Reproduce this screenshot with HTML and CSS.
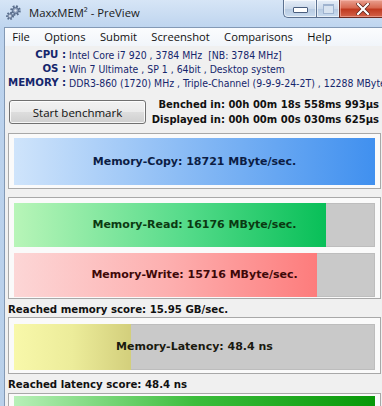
FILE: index.html
```html
<!DOCTYPE html>
<html>
<head>
<meta charset="utf-8">
<title>MaxxMEM² - PreView</title>
<link rel="stylesheet" href="styles.css">
</head>
<body>
<div class="window">
  <div class="titlebar">
    <svg class="app-icon" width="17" height="17" viewBox="0 0 17 17">
      <circle cx="10.5" cy="6.5" r="4" fill="none" stroke="#5a6e8c" stroke-width="2.6" stroke-dasharray="1.7 1.45"/>
      <circle cx="10.5" cy="6.5" r="3.2" fill="#8a9cb8" stroke="#4f6282" stroke-width="0.8"/>
      <circle cx="10.5" cy="6.5" r="1.2" fill="#dfe8f4"/>
      <circle cx="5" cy="12" r="2.9" fill="none" stroke="#5a6e8c" stroke-width="2.2" stroke-dasharray="1.4 1.3"/>
      <circle cx="5" cy="12" r="2.3" fill="#9aaac2" stroke="#4f6282" stroke-width="0.7"/>
      <circle cx="5" cy="12" r="0.9" fill="#dfe8f4"/>
    </svg>
    <span class="title">MaxxMEM² - PreView</span>
    <div class="controls">
      <div class="ctl ctl-min"><span class="min-glyph"></span></div>
      <div class="ctl ctl-max"><span class="max-glyph"></span></div>
      <div class="ctl ctl-close">
        <svg width="14" height="12" viewBox="0 0 14 12"><path d="M2 1 L12 11 M12 1 L2 11" stroke="#5a2018" stroke-width="3.6" stroke-linecap="square"/><path d="M2 1 L12 11 M12 1 L2 11" stroke="#ffffff" stroke-width="2.2" stroke-linecap="square"/></svg>
      </div>
    </div>
  </div>
  <div class="client">
    <div class="menubar">
      <span class="menu-item">File</span>
      <span class="menu-item">Options</span>
      <span class="menu-item">Submit</span>
      <span class="menu-item">Screenshot</span>
      <span class="menu-item">Comparisons</span>
      <span class="menu-item">Help</span>
    </div>
    <div class="info">
      <span class="info-label">CPU :</span><span class="info-value">Intel Core i7 920 , 3784 MHz&nbsp;&nbsp;[NB: 3784 MHz]</span>
      <span class="info-label">OS :</span><span class="info-value">Win 7 Ultimate , SP 1 , 64bit , Desktop system</span>
      <span class="info-label">MEMORY :</span><span class="info-value">DDR3-860 (1720) MHz , Triple-Channel (9-9-9-24-2T) , 12288 MByte</span>
    </div>
    <div class="actions">
      <div class="button">Start benchmark</div>
      <div class="times">
        <div>Benched in: 00h 00m 18s 558ms 993µs</div>
        <div>Displayed in: 00h 00m 00s 030ms 625µs</div>
      </div>
    </div>
    <div class="panel panel-copy">
      <div class="bar bar-copy">
        <div class="fill fill-copy" style="width:100%"></div>
        <div class="bar-label label-copy">Memory-Copy: 18721 MByte/sec.</div>
      </div>
    </div>
    <div class="panel panel-rw">
      <div class="bar bar-read">
        <div class="fill fill-read" style="width:86.4%"></div>
        <div class="bar-label label-read">Memory-Read: 16176 MByte/sec.</div>
      </div>
      <div class="bar bar-write">
        <div class="fill fill-write" style="width:83.9%"></div>
        <div class="bar-label label-write">Memory-Write: 15716 MByte/sec.</div>
      </div>
    </div>
    <div class="score">Reached memory score: 15.95 GB/sec.</div>
    <div class="panel panel-lat">
      <div class="bar bar-lat">
        <div class="fill fill-lat" style="width:32.3%"></div>
        <div class="bar-label label-lat">Memory-Latency: 48.4 ns</div>
      </div>
    </div>
    <div class="score score-lat">Reached latency score: 48.4 ns</div>
    <div class="panel panel-bottom">
      <div class="bar bar-bottom">
        <div class="fill fill-bottom" style="width:100%"></div>
      </div>
    </div>
  </div>
</div>
</body>
</html>
```
FILE: styles.css
```css
html, body {
  margin: 0;
  padding: 0;
  width: 382px;
  height: 406px;
  overflow: hidden;
  background: #b9d1ea;
}

.window {
  width: 392px;
  height: 406px;
  overflow: hidden;
  background: linear-gradient(#d6e5f6, #bcd3ee 30px, #b9d0ea);
  display: flex;
  flex-direction: column;
  padding: 0 4px;
  box-sizing: border-box;
}

/* title bar */
.titlebar {
  height: 27px;
  display: flex;
  align-items: flex-start;
  flex-shrink: 0;
}
.app-icon {
  margin: 4px 0 0 1px;
}
.title {
  margin: 5px 0 0 7px;
  font-family: "Open Sans", "Noto Sans", sans-serif;
  font-size: 11.3px;
  line-height: 16px;
  color: #1a1a1a;
}
.controls {
  margin-left: auto;
  margin-right: 2px;
  display: flex;
  height: 18px;
}
.ctl {
  height: 18px;
  box-sizing: border-box;
  border: 1px solid #5c7190;
  border-top: none;
  display: flex;
  align-items: center;
  justify-content: center;
}
.ctl-min {
  width: 33px;
  border-radius: 0 0 0 5px;
  border-right: none;
  background: linear-gradient(#e6eef8, #cbd9ea 50%, #b6c9e0 51%, #c9dbef);
  box-shadow: inset 0 0 0 1px rgba(255,255,255,0.6);
}
.min-glyph {
  width: 13px;
  height: 4px;
  margin-top: 3px;
  background: #ffffff;
  border: 1px solid #4a5e7e;
  border-radius: 1px;
}
.ctl-max {
  width: 23px;
  border-right: none;
  background: linear-gradient(#e6eef8, #cbd9ea 50%, #b6c9e0 51%, #c9dbef);
  box-shadow: inset 0 0 0 1px rgba(255,255,255,0.6);
}
.max-glyph {
  width: 9px;
  height: 7px;
  border: 1px solid #9fb3cf;
  border-top-width: 2px;
  background: #d8e3f0;
}
.ctl-close {
  width: 47px;
  border-color: #6b2a22;
  border-radius: 0 0 5px 0;
  background: linear-gradient(#e9a090, #d86a52 45%, #c03a20 55%, #d3634a);
  box-shadow: inset 0 0 0 1px rgba(255,200,190,0.5);
}

/* client area */
.client {
  flex: 1;
  min-height: 0;
  background: #f0f0f0;
  border-left: 1px solid #8399b5;
  border-top: 1px solid #8399b5;
  display: flex;
  flex-direction: column;
  font-family: "DejaVu Sans", sans-serif;
}

.menubar {
  height: 18px;
  flex-shrink: 0;
  display: flex;
  align-items: center;
  background: linear-gradient(#fbfcfe, #f1f5fa);
  font-family: "Open Sans", "Noto Sans", sans-serif;
  font-size: 11.2px;
  color: #111;
}
.menu-item {
  padding: 0 7.2px;
  line-height: 18px;
}

.info {
  display: grid;
  grid-template-columns: 58px auto;
  column-gap: 3px;
  padding: 2px 0 0 3px;
  font-size: 10.4px;
  line-height: 14px;
  color: #15266c;
  white-space: nowrap;
}
.info-label {
  font-weight: bold;
  font-size: 10.2px;
  text-align: right;
}
.info-value {
  font-stretch: condensed;
}

.actions {
  display: flex;
  align-items: flex-start;
  margin-top: 10px;
  padding-left: 4px;
  flex-shrink: 0;
}
.button {
  width: 137px;
  height: 24px;
  box-sizing: border-box;
  border: 1px solid #707070;
  border-radius: 3px;
  background: linear-gradient(#f2f2f2, #ebebeb 48%, #dddddd 52%, #cfcfcf);
  box-shadow: inset 0 0 0 1px rgba(255,255,255,0.8);
  display: flex;
  align-items: center;
  justify-content: center;
  font-family: "Open Sans", "Noto Sans", sans-serif;
  font-size: 11.5px;
  color: #111;
}
.times {
  margin-left: auto;
  margin-right: 9px;
  margin-top: -3px;
  text-align: right;
  font-weight: bold;
  font-size: 10px;
  line-height: 15px;
  color: #111;
  white-space: nowrap;
}

/* panels */
.panel {
  flex-shrink: 0;
  margin: 0 7px 0 3px;
  border: 1px solid #a8a8a8;
  background: #fafafa;
  padding: 4px 5px 3px 5px;
  display: flex;
  flex-direction: column;
  gap: 6px;
}
.panel-copy {
  margin-top: 6px;
}
.panel-rw {
  margin-top: 8px;
  padding-top: 5px;
  padding-bottom: 1px;
}
.panel-lat {
  padding-top: 6px;
  padding-bottom: 3px;
}
.panel-bottom {
  padding-top: 2px;
}

.bar {
  display: grid;
  background: #c9c9c9;
  box-shadow: inset 0 0 0 1px rgba(0,0,0,0.06);
}
.bar > * {
  grid-area: 1 / 1;
}
.bar-copy { height: 47px; }
.bar-read { height: 44px; }
.bar-write { height: 44px; }
.bar-lat { height: 46px; }
.bar-bottom { height: 20px; }

.fill { height: 100%; }
.fill-copy { background: linear-gradient(90deg, #cfe4fb, #8dbdf5 45%, #4090ef); }
.fill-read { background: linear-gradient(90deg, #b8f5b8, #55db8a 55%, #08bf58); }
.fill-write { background: linear-gradient(90deg, #fcd6d6, #fdb0b0 50%, #fd7c7c); }
.fill-lat { background: linear-gradient(90deg, #f8f8aa, #ecec9a 50%, #d3cf7c); }
.fill-bottom { background: linear-gradient(90deg, #b8f0b8, #3cbd3c 50%, #089808); }

.bar-label {
  align-self: center;
  justify-self: center;
  font-weight: bold;
  font-size: 11px;
  line-height: 14px;
  white-space: nowrap;
}
.label-copy { color: #0c1d44; }
.label-read { color: #0b3a12; }
.label-write { color: #3e0808; }
.label-lat { color: #1a1a10; }

.score {
  flex-shrink: 0;
  padding: 4px 0 0 3px;
  font-weight: bold;
  font-size: 10.2px;
  line-height: 14px;
  color: #111;
  white-space: nowrap;
}
.score-lat {
  padding-top: 3px;
  line-height: 16px;
}
```
